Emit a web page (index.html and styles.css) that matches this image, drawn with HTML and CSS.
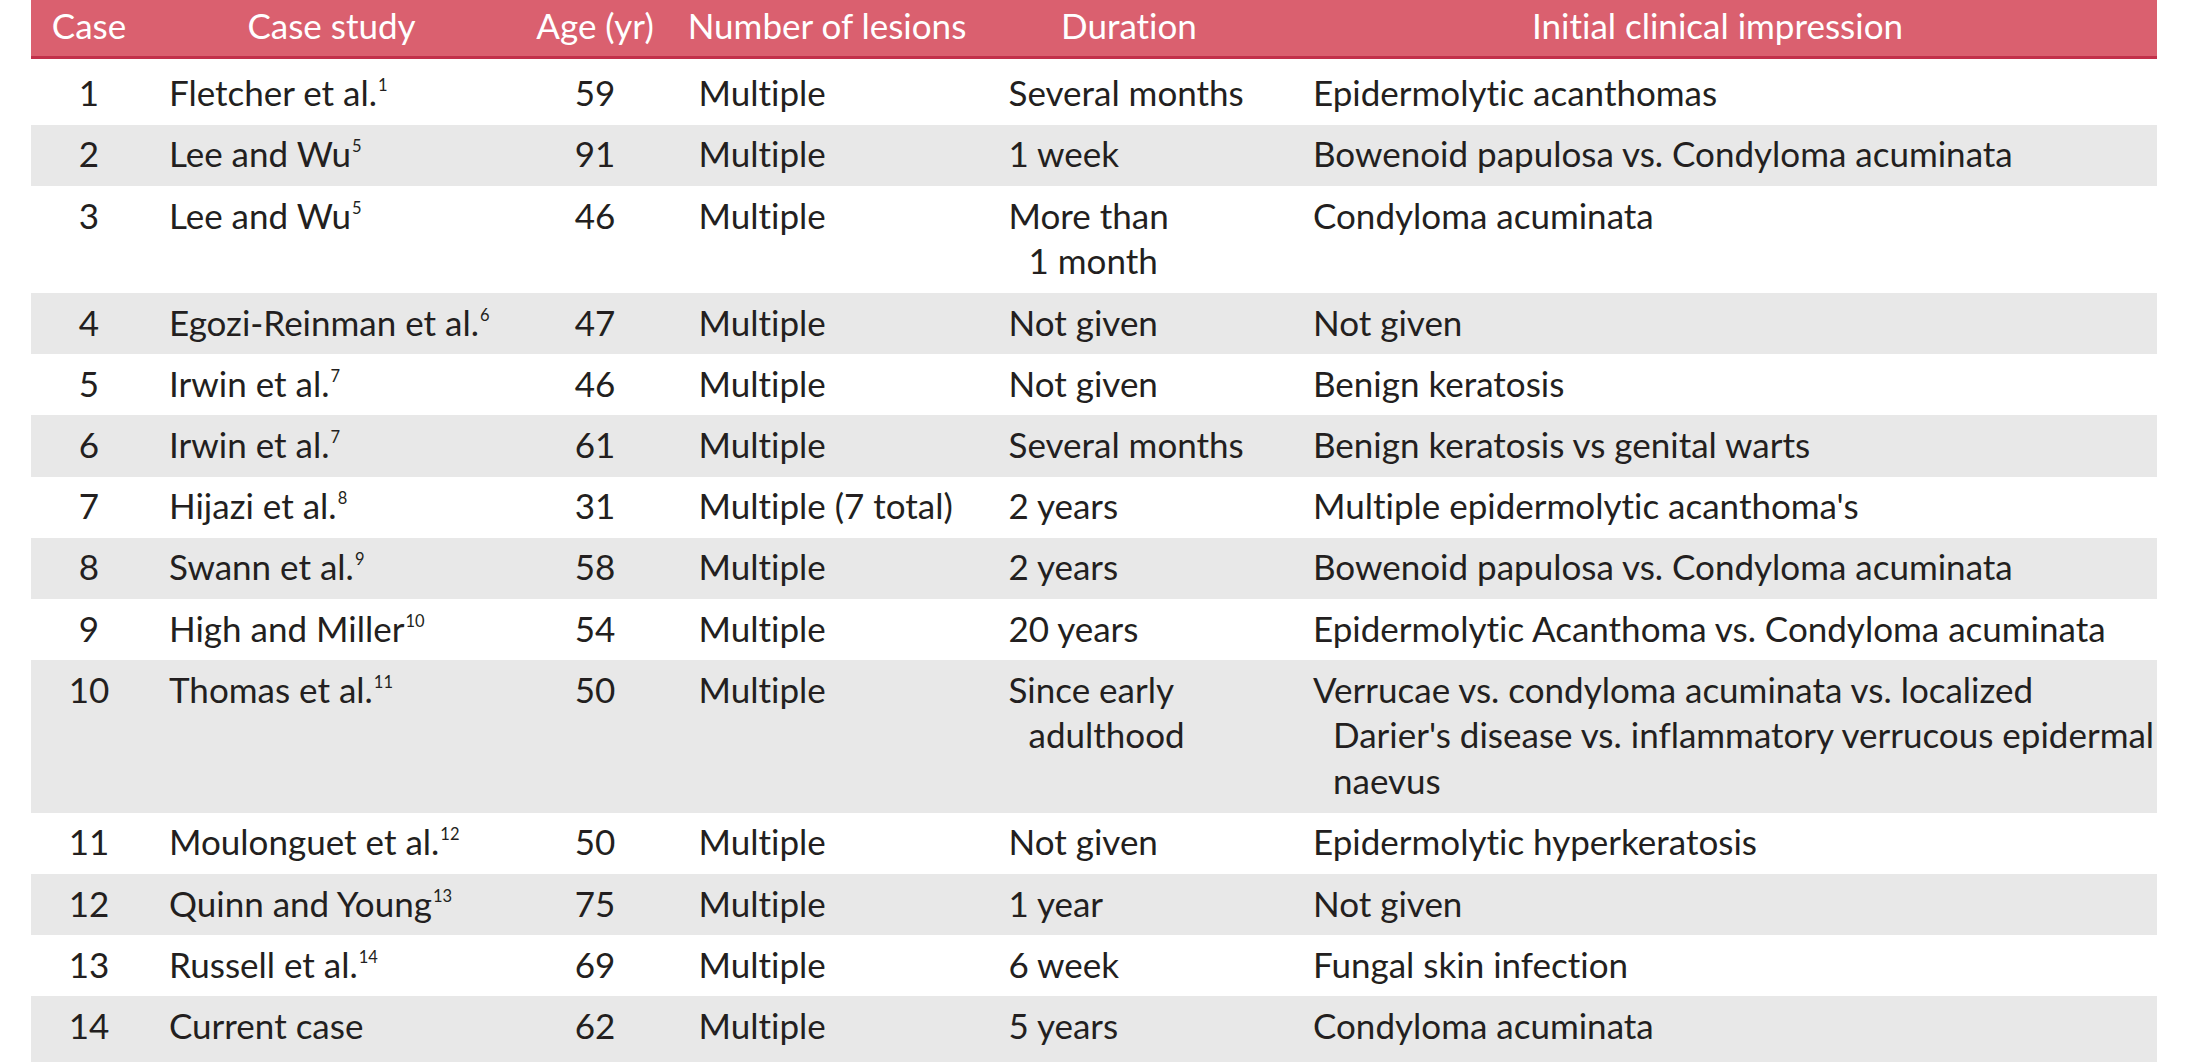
FILE: index.html
```html
<!DOCTYPE html>
<html lang="en">
<head>
<meta charset="utf-8">
<title>Reported cases</title>
<link rel="stylesheet" href="styles.css">
</head>
<body>
<table class="cases">
  <colgroup>
    <col class="w-case">
    <col class="w-study">
    <col class="w-age">
    <col class="w-num">
    <col class="w-dur">
    <col class="w-imp">
  </colgroup>
  <thead>
    <tr>
      <th>Case</th>
      <th>Case study</th>
      <th>Age (yr)</th>
      <th>Number of lesions</th>
      <th>Duration</th>
      <th>Initial clinical impression</th>
    </tr>
  </thead>
  <tbody>
    <tr><td>1</td><td>Fletcher et al.<sup>1</sup></td><td>59</td><td>Multiple</td><td>Several months</td><td>Epidermolytic acanthomas</td></tr>
    <tr><td>2</td><td>Lee and Wu<sup>5</sup></td><td>91</td><td>Multiple</td><td>1 week</td><td>Bowenoid papulosa vs. Condyloma acuminata</td></tr>
    <tr><td>3</td><td>Lee and Wu<sup>5</sup></td><td>46</td><td>Multiple</td><td>More than<br>1 month</td><td>Condyloma acuminata</td></tr>
    <tr><td>4</td><td>Egozi-Reinman et al.<sup>6</sup></td><td>47</td><td>Multiple</td><td>Not given</td><td>Not given</td></tr>
    <tr><td>5</td><td>Irwin et al.<sup>7</sup></td><td>46</td><td>Multiple</td><td>Not given</td><td>Benign keratosis</td></tr>
    <tr><td>6</td><td>Irwin et al.<sup>7</sup></td><td>61</td><td>Multiple</td><td>Several months</td><td>Benign keratosis vs genital warts</td></tr>
    <tr><td>7</td><td>Hijazi et al.<sup>8</sup></td><td>31</td><td>Multiple (7 total)</td><td>2 years</td><td>Multiple epidermolytic acanthoma's</td></tr>
    <tr><td>8</td><td>Swann et al.<sup>9</sup></td><td>58</td><td>Multiple</td><td>2 years</td><td>Bowenoid papulosa vs. Condyloma acuminata</td></tr>
    <tr><td>9</td><td>High and Miller<sup>10</sup></td><td>54</td><td>Multiple</td><td>20 years</td><td>Epidermolytic Acanthoma vs. Condyloma acuminata</td></tr>
    <tr><td>10</td><td>Thomas et al.<sup>11</sup></td><td>50</td><td>Multiple</td><td>Since early<br>adulthood</td><td>Verrucae vs. condyloma acuminata vs. localized<br>Darier's disease vs. inflammatory verrucous epidermal<br>naevus</td></tr>
    <tr><td>11</td><td>Moulonguet et al.<sup>12</sup></td><td>50</td><td>Multiple</td><td>Not given</td><td>Epidermolytic hyperkeratosis</td></tr>
    <tr><td>12</td><td>Quinn and Young<sup>13</sup></td><td>75</td><td>Multiple</td><td>1 year</td><td>Not given</td></tr>
    <tr><td>13</td><td>Russell et al.<sup>14</sup></td><td>69</td><td>Multiple</td><td>6 week</td><td>Fungal skin infection</td></tr>
    <tr><td>14</td><td>Current case</td><td>62</td><td>Multiple</td><td>5 years</td><td>Condyloma acuminata</td></tr>
  </tbody>
</table>
</body>
</html>
```

FILE: styles.css
```css
html, body {
  margin: 0;
  padding: 0;
  background: #ffffff;
}

body {
  font-family: Lato, "Open Sans", "Liberation Sans", sans-serif;
  color: #231f20;
  font-variant-ligatures: no-common-ligatures;
}

.cases {
  margin-left: 31px;
  width: 2126px;
  table-layout: fixed;
  border-collapse: separate;
  border-spacing: 0;
  font-size: 35px;
  line-height: 45.7px;
}

.w-case { width: 116px; }
.w-study { width: 369px; }
.w-age { width: 158px; }
.w-num { width: 306px; }
.w-dur { width: 298px; }
.w-imp { width: 879px; }

.cases th {
  background: #da606f;
  color: #ffffff;
  font-weight: 400;
  text-align: center;
  white-space: nowrap;
  padding: 3px 0 7px;
  border-bottom: 3px solid #c2304a;
}

.cases td {
  vertical-align: top;
  white-space: nowrap;
  padding: 6.5px 0 9px;
  text-align: left;
}

.cases tbody tr:first-child td {
  padding-top: 11.5px;
}

.cases tbody tr:last-child td {
  padding-bottom: 20px;
}

.cases tbody tr:nth-child(even) td {
  background: #e8e8e8;
}

.cases td:nth-child(1),
.cases td:nth-child(3) {
  text-align: center;
}

.cases td:nth-child(2) { padding-left: 22px; }
.cases td:nth-child(4) { padding-left: 24.5px; }

.cases td:nth-child(5) {
  padding-left: 48.5px;
  text-indent: -20px;
}

.cases td:nth-child(6) {
  padding-left: 55px;
  text-indent: -20px;
}

.cases sup {
  font-size: 16.5px;
  line-height: 0;
  vertical-align: 15px;
  margin-left: 1px;
}
```
